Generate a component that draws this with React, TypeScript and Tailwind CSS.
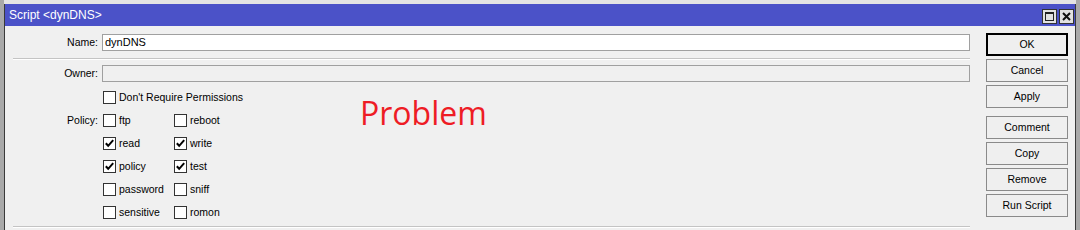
import React from 'react';

const font = { fontFamily: '"Liberation Sans", Arial, sans-serif' };

const Check: React.FC<{ label: string; checked?: boolean; width?: string }> = ({ label, checked, width = 'w-[71px]' }) => (
  <div className={`flex items-center ${width}`}>
    <div className="w-[13px] h-[13px] border border-[#333] bg-white shrink-0 flex items-center justify-center">
      {checked && (
        <svg width="11" height="11" viewBox="0 0 11 11">
          <path d="M1.8 5.2 L4.2 7.8 L9.2 2.2" fill="none" stroke="#000" strokeWidth="2" />
        </svg>
      )}
    </div>
    <span className="ml-[3px] text-[10.5px] text-black leading-none">{label}</span>
  </div>
);

const Btn: React.FC<{ label: string; primary?: boolean; className?: string }> = ({ label, primary, className = '' }) => (
  <div
    className={`h-[23px] w-[82px] flex items-center justify-center text-[10.5px] text-black bg-[#efefef] ${
      primary ? 'border-2 border-black' : 'border border-[#8a8a8a]'
    } ${className}`}
  >
    {label}
  </div>
);

const Row: React.FC<{ label?: string; children: React.ReactNode }> = ({ label, children }) => (
  <div className="flex items-center h-[23px]">
    <div className="w-[94px] text-right text-[10.5px] pr-[1px]">{label}</div>
    <div className="ml-[4px] flex items-center">{children}</div>
  </div>
);

export default function App() {
  return (
    <div className="w-[1080px] h-[230px] bg-[#a9a9a9] px-[4px] overflow-hidden" style={font}>
      <div className="h-full bg-[#e4e4e4] pt-[4px] relative">
        <div className="h-full border-x border-[#3a3a3a] flex flex-col bg-[#f0f0f0]">
          {/* title bar */}
          <div className="h-[22px] bg-[#4b52c8] flex items-center justify-between pl-[4px] pr-[1px] shrink-0">
            <span className="text-white text-[12px]">Script &lt;dynDNS&gt;</span>
            <div className="flex gap-[2px] mt-[3px]">
              <div className="w-[15px] h-[15px] bg-[#e2e2e2] border border-[#333] flex items-center justify-center">
                <div className="w-[9px] h-[9px] border border-[#222] border-t-2" />
              </div>
              <div className="w-[15px] h-[15px] bg-[#e2e2e2] border border-[#333] flex items-center justify-center">
                <svg width="9" height="9" viewBox="0 0 9 9">
                  <path d="M1 1 L8 8 M8 1 L1 8" stroke="#111" strokeWidth="2" />
                </svg>
              </div>
            </div>
          </div>

          {/* body */}
          <div className="flex flex-1 text-[10.5px] text-black">
            <div className="w-[965px] flex flex-col">
              <div className="flex items-center h-[17px] mt-[8px]">
                <div className="w-[94px] text-right pr-[1px]">Name:</div>
                <div className="ml-[3px] flex-1 h-[17px] bg-white border border-[#a0a0a0] flex items-center px-[2px] text-[11px]">
                  dynDNS
                </div>
              </div>
              <div className="ml-[8px] mt-[7px] h-[2px] border-t border-[#c4c4c4] border-b border-b-white" />
              <div className="flex items-center h-[17px] mt-[5px]">
                <div className="w-[94px] text-right pr-[1px]">Owner:</div>
                <div className="ml-[3px] flex-1 h-[17px] bg-[#f0f0f0] border border-[#a0a0a0]" />
              </div>
              <div className="mt-[4px]">
                <Row>
                  <Check label="Don't Require Permissions" width="w-[200px]" />
                </Row>
                <Row label="Policy:">
                  <Check label="ftp" />
                  <Check label="reboot" />
                </Row>
                <Row>
                  <Check label="read" checked />
                  <Check label="write" checked />
                </Row>
                <Row>
                  <Check label="policy" checked />
                  <Check label="test" checked />
                </Row>
                <Row>
                  <Check label="password" />
                  <Check label="sniff" />
                </Row>
                <Row>
                  <Check label="sensitive" />
                  <Check label="romon" />
                </Row>
              </div>
              <div className="ml-[8px] mt-[2px] h-[2px] border-t border-[#c4c4c4] border-b border-b-white" />
            </div>

            <div className="ml-[16px] flex flex-col pt-[7px]">
              <Btn label="OK" primary />
              <Btn label="Cancel" className="mt-[3px]" />
              <Btn label="Apply" className="mt-[3px]" />
              <Btn label="Comment" className="mt-[8px]" />
              <Btn label="Copy" className="mt-[3px]" />
              <Btn label="Remove" className="mt-[3px]" />
              <Btn label="Run Script" className="mt-[3px]" />
            </div>
          </div>
        </div>

        <div
          className="absolute left-[356px] top-[97px] text-[32px] leading-[32px] text-[#ee1c25]"
          style={{ fontFamily: '"Open Sans", "Noto Sans", sans-serif' }}
        >
          Problem
        </div>
      </div>
    </div>
  );
}
